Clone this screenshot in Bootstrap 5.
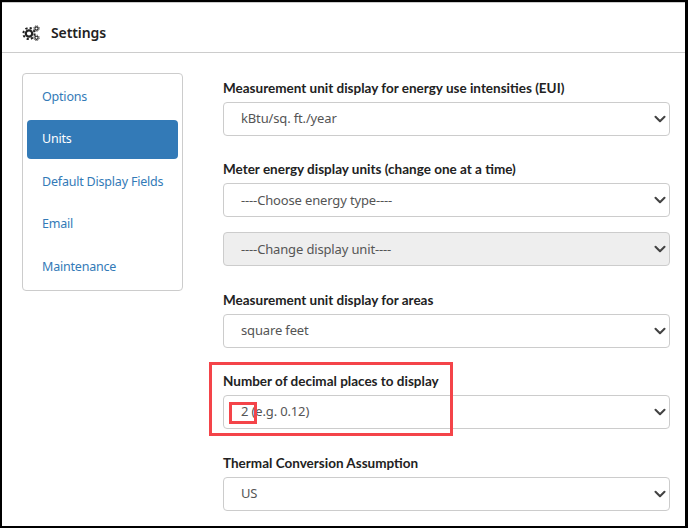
<!DOCTYPE html>
<html lang="en"><head><meta charset="utf-8"><title>Settings</title>
<link href="https://cdn.jsdelivr.net/npm/bootstrap@5.3.0/dist/css/bootstrap.min.css" rel="stylesheet">
<style>
html,body{height:100%;overflow:hidden;background:#fff}
body{font-family:"Noto Sans","Open Sans",sans-serif;font-size:13px;color:#222}
.shot-frame{position:relative;width:688px;height:528px;overflow:hidden;border:solid #000;border-width:2px 3px 2px 2px;background:#fff;box-shadow:inset 0 1px 0 #ccc}
.shot-head{height:49px;margin-top:2px;border-bottom:1px solid #ccc;padding:9px 0 0 20px;gap:11px;font-size:14px;font-weight:600;color:#222;letter-spacing:-.1px}
.shot-body{padding:20px 0 0 20px}
.side-card{width:161px;height:218px;flex:none;border:1px solid #ccc;border-radius:4px;padding:4px}
.side-link{height:39px;margin-bottom:3.4px;padding:0 15px;font-size:12.5px;letter-spacing:-.2px;color:#337ab7;border-radius:4px;text-decoration:none;display:flex;align-items:center;white-space:nowrap}
.side-link.on{background:#337ab7;color:#fff;padding-bottom:2px}
.form-col{width:447px;margin-left:40px;padding-top:7px}
.fld-label{display:block;font-size:13.5px;font-weight:700;line-height:16px;margin-bottom:6px;color:#222;font-family:Lato,sans-serif}
.fld-sel{height:34px;padding:0 30px 0 17px;font-size:13px;letter-spacing:-.15px;color:#555;border-color:#ccc;border-radius:4px;background-size:12px 12px;background-position:right 3px center;--bs-form-select-bg-img:url("data:image/svg+xml,%3csvg xmlns='http://www.w3.org/2000/svg' viewBox='0 0 16 16'%3e%3cpath fill='none' stroke='%23444' stroke-linecap='round' stroke-linejoin='round' stroke-width='2.8' d='m2 5 6 6 6-6'/%3e%3c/svg%3e")}
.fld-sel:disabled{background-color:#eee;color:#555}
.fld-first{margin-bottom:15px}
.gap-a{margin-bottom:25.4px}
.mark-a,.mark-b{position:absolute;border:3px solid #f44449;pointer-events:none}
.mark-a{left:207px;top:360px;width:244px;height:74px}
.mark-b{left:227px;top:400px;width:28px;height:22px}
</style></head>
<body>
<div class="shot-frame">
  <div class="shot-head d-flex align-items-center">
    <svg width="18" height="16" viewBox="0 0 18 16" aria-hidden="true"><g fill="none" stroke="#222"><circle cx="7" cy="8.5" r="3.2" stroke-width="2.2"/><circle cx="7" cy="8.5" r="5.6" stroke-width="2" stroke-dasharray="2.2 2.2"/><circle cx="14.5" cy="3.5" r="1.6" stroke-width="1.1"/><circle cx="14.5" cy="3.5" r="2.7" stroke-width="1" stroke-dasharray="1.06 1.06"/><circle cx="14.5" cy="12.8" r="1.6" stroke-width="1.1"/><circle cx="14.5" cy="12.8" r="2.7" stroke-width="1" stroke-dasharray="1.06 1.06"/></g></svg>
    <span>Settings</span>
  </div>
  <div class="shot-body d-flex">
    <nav class="side-card">
      <a class="side-link" href="#">Options</a>
      <a class="side-link on" href="#">Units</a>
      <a class="side-link" href="#">Default Display Fields</a>
      <a class="side-link" href="#">Email</a>
      <a class="side-link" href="#">Maintenance</a>
    </nav>
    <div class="form-col">
      <div class="gap-a">
        <label class="fld-label">Measurement unit display for energy use intensities (EUI)</label>
        <select class="form-select fld-sel"><option>kBtu/sq. ft./year</option></select>
      </div>
      <div class="gap-a">
        <label class="fld-label">Meter energy display units (change one at a time)</label>
        <select class="form-select fld-sel fld-first"><option>----Choose energy type----</option></select>
        <select class="form-select fld-sel" disabled><option>----Change display unit----</option></select>
      </div>
      <div class="gap-a">
        <label class="fld-label">Measurement unit display for areas</label>
        <select class="form-select fld-sel"><option>square feet</option></select>
      </div>
      <div class="gap-a">
        <label class="fld-label">Number of decimal places to display</label>
        <select class="form-select fld-sel"><option>2 (e.g. 0.12)</option></select>
      </div>
      <div>
        <label class="fld-label">Thermal Conversion Assumption</label>
        <select class="form-select fld-sel"><option>US</option></select>
      </div>
    </div>
  </div>
  <div class="mark-a"></div>
  <div class="mark-b"></div>
</div>
</body></html>
